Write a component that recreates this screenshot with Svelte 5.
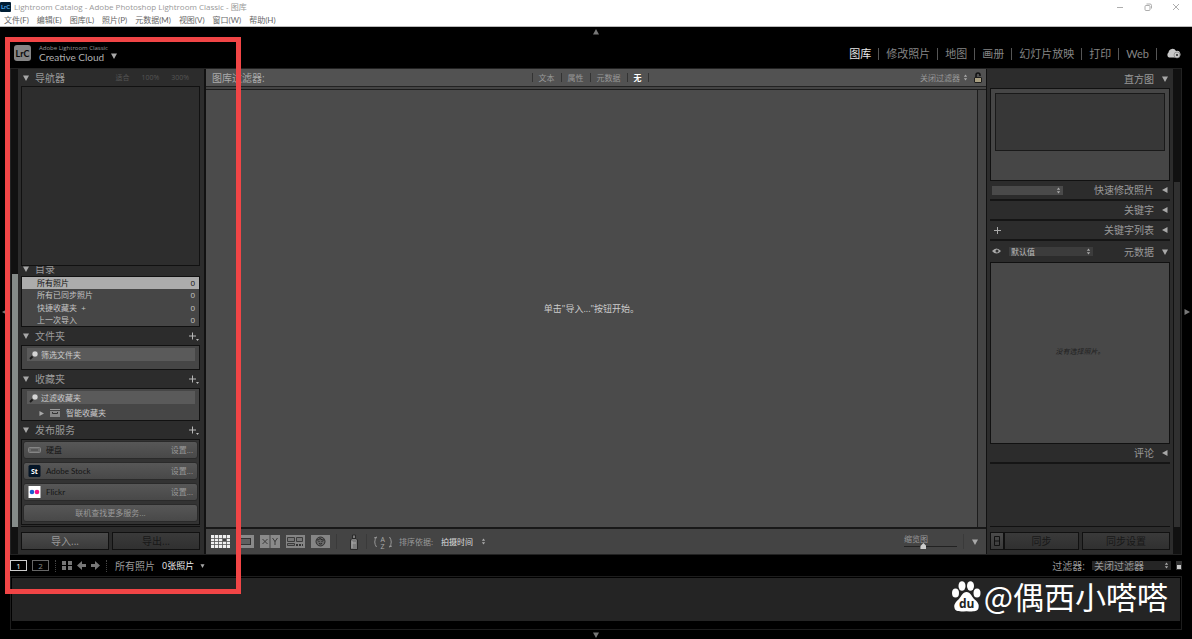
<script>
  const menus = ['文件(F)', '编辑(E)', '图库(L)', '照片(P)', '元数据(M)', '视图(V)', '窗口(W)', '帮助(H)'];
  const modules = ['图库', '修改照片', '地图', '画册', '幻灯片放映', '打印', 'Web'];
  const filters = ['文本', '属性', '元数据', '无'];
  const catalog = ['所有照片', '所有已同步照片', '快捷收藏夹  +', '上一次导入'];
  let thumb = $state(35);
</script>

{#snippet tri(dir)}
  <svg class="tri {dir}" viewBox="0 0 6 6" aria-hidden="true"><path d="M0 .5H6L3 6Z" /></svg>
{/snippet}

{#snippet heading(title)}
  <header class="head">
    {@render tri('down')}
    <h2>{title}</h2>
    <button class="add" aria-label="添加">
      <svg viewBox="0 0 10 9"><path d="M0 4H7M3.500 .5V7.500" stroke="#b8b8b8" /><path d="M7 7h3L8.500 9Z" fill="#b8b8b8" /></svg>
    </button>
  </header>
{/snippet}

{#snippet search(text, id)}
  <div class="search">
    <svg viewBox="0 0 10 10" aria-hidden="true"><path d="M1 9L4 6" stroke="#1c1c1c" stroke-width="2" /><circle cx="6" cy="4" r="3" fill="#d5d5d5" stroke="#555" stroke-width=".5" /></svg>
    <input {id} type="text" placeholder={text} aria-label={text} />
  </div>
{/snippet}

{#snippet updown()}
  <svg class="updown" viewBox="0 0 6 8" aria-hidden="true"><path d="M1 3L3 .5L5 3ZM1 5L3 7.500L5 5Z" /></svg>
{/snippet}

<div class="app">
  <div class="titlebar">
    <svg class="appicon" viewBox="0 0 11 10"><rect width="11" height="10" rx="1" fill="#001d34" /><text x="1" y="7" font-size="6" font-family="Lato, sans-serif" font-weight="700" fill="#4fa8e8">LrC</text></svg>
    <span>Lightroom Catalog - Adobe Photoshop Lightroom Classic - 图库</span>
    <div class="win">
      <button aria-label="最小化"><svg viewBox="0 0 8 8"><path d="M1 4.500H7" /></svg></button>
      <button aria-label="还原"><svg viewBox="0 0 8 8"><rect x="1" y="2.500" width="5" height="5" rx="1" /><path d="M2.500 1H6Q7.500 1 7.500 2.500V5.500" /></svg></button>
      <button aria-label="关闭"><svg viewBox="0 0 8 8"><path d="M1 1L7 7M7 1L1 7" /></svg></button>
    </div>
  </div>
  <nav class="menubar">
    {#each menus as m}<button>{m}</button>{/each}
  </nav>

  <header class="top">
    <svg class="logo" viewBox="0 0 17 16"><rect width="17" height="16" rx="3" fill="#858585" /><text x="1.500" y="11.500" font-size="9" font-weight="700" font-family="Lato, sans-serif" fill="#0a0a0a">LrC</text></svg>
    <button class="identity">
      <span class="brand"><small>Adobe Lightroom Classic</small><strong>Creative Cloud</strong></span>
      {@render tri('down')}
    </button>
    <button class="edge north" aria-label="隐藏顶部">{@render tri('up')}</button>
    <nav class="modules">
      {#each modules as m, i}
        <a href="#{i}" class:active={i === 0}>{m}</a><i></i>
      {/each}
      <svg class="cloud" viewBox="0 0 15 11"><path d="M3 9.500A3 3 0 0 1 2.500 4.500 A4 4 0 0 1 10 3 A3 3 0 0 1 12 9.500Z" fill="#c9c9c9" /><circle cx="11" cy="7" r="3" fill="#c9c9c9" stroke="#777" stroke-width=".6" /><circle cx="11" cy="7" r="1" fill="#222" /></svg>
    </nav>
  </header>

  <div class="row">
    <button class="edge side" aria-label="隐藏左侧面板">{@render tri('left')}</button>
    <main class="work">
      <div class="track leftTrack"><div></div></div>
      <aside class="panel">
        <header class="head nav">
          {@render tri('down')}
          <h2>导航器</h2>
          <div class="zooms"><button>适合</button><button>100%</button><button>300%</button></div>
        </header>
        <div class="preview"></div>
        <header class="head cut">{@render tri('down')}<h2>目录</h2></header>
        <ul class="box catalog">
          {#each catalog as c, i}
            <li class:selected={i === 0}><span>{c}</span><span>0</span></li>
          {/each}
        </ul>
        {@render heading('文件夹')}
        <section class="box folders">{@render search('筛选文件夹', 'folders')}</section>
        {@render heading('收藏夹')}
        <section class="box collections">
          {@render search('过滤收藏夹', 'collections')}
          <div class="smart">
            {@render tri('right')}
            <svg class="set" viewBox="0 0 10 8"><path d="M0 .5H10" stroke="#999" /><path d="M0 2h10v6H0z" fill="#888" /><path d="M2.500 3v1.500h5V3" stroke="#333" fill="none" /></svg>
            <span>智能收藏夹</span>
          </div>
        </section>
        {@render heading('发布服务')}
        <section class="box services">
          <div class="service">
            <svg viewBox="0 0 13 12"><rect x=".5" y="3.500" width="12" height="5" rx="1" fill="#6c6c6c" stroke="#858585" /><path d="M3 6h7" stroke="#444" /></svg>
            <span>硬盘</span><button>设置...</button>
          </div>
          <div class="service">
            <svg viewBox="0 0 13 12"><rect x=".5" width="12" height="12" rx="1.500" fill="#051526" /><text x="3" y="8.500" font-size="7" font-weight="700" font-family="Open Sans, sans-serif" fill="#fff">St</text></svg>
            <span>Adobe Stock</span><button>设置...</button>
          </div>
          <div class="service">
            <svg viewBox="0 0 13 12"><rect x=".5" width="12" height="12" fill="#fff" /><circle cx="4" cy="6" r="2.300" fill="#1a5fd0" /><circle cx="9" cy="6" r="2.300" fill="#f5148a" /></svg>
            <span>Flickr</span><button>设置...</button>
          </div>
          <button class="service more">联机查找更多服务...</button>
        </section>
        <footer class="actions">
          <button class="btn">导入...</button>
          <button class="btn dim">导出...</button>
        </footer>
      </aside>

      <section class="center">
        <header class="filterbar">
          <h1>图库过滤器:</h1>
          <div class="tabs">
            <i></i>
            {#each filters as f, i}<button class:active={i === 3}>{f}</button><i></i>{/each}
          </div>
          <label class="pick end"><select aria-label="过滤器预设"><option>关闭过滤器</option></select>{@render updown()}</label>
          <button class="lock" aria-label="锁定过滤器">
            <svg viewBox="0 0 8 12"><path d="M2 6V3Q2 1 4 1T6 3V4" stroke="#111" stroke-width="1.500" fill="none" /><rect x=".5" y="5.500" width="7" height="5" rx=".5" fill="#aaa081" stroke="#1d1d1d" /></svg>
          </button>
        </header>
        <div class="stage"><div class="canvas">单击"导入..."按钮开始。</div><div class="gutter"></div></div>
        <footer class="toolbar">
          <button aria-label="网格视图"><svg width="19" height="13" viewBox="0 0 19 13"><rect width="19" height="13" fill="#f0f0f0" /><path d="M3.500 0V13M7.500 0V13M11.500 0V13M15.500 0V13M0 3.500H19M0 6.500H19M0 9.500H19" stroke="#555" stroke-width=".8" /><path d="M12 4h3v2h-3z" fill="#444" /></svg></button>
          <button aria-label="放大视图"><svg width="18" height="13" viewBox="0 0 18 13"><rect width="18" height="13" fill="#8a8a8a" /><rect x="3.500" y="3.500" width="11" height="6" fill="#606060" stroke="#333" /></svg></button>
          <button aria-label="比较视图"><svg width="20" height="13" viewBox="0 0 20 13"><rect width="20" height="13" fill="#8a8a8a" /><path d="M10 0V13" stroke="#444" /><path d="M2.500 4L7.500 9M7.500 4L2.500 9M12.500 3L15 6.500L17.500 3M15 6V10" stroke="#3b3b3b" fill="none" /></svg></button>
          <button aria-label="筛选视图"><svg width="19" height="13" viewBox="0 0 19 13"><rect width="19" height="13" fill="#858585" /><path d="M1.500 2.500h7v4h-7zM10.500 2.500h6v4h-6zM1.500 8.500h7v2h-7z" fill="#777" stroke="#3c3c3c" /><path d="M10 10h7" stroke="#333" stroke-width="2" stroke-dasharray="2 1" /></svg></button>
          <button aria-label="人物"><svg width="19" height="13" viewBox="0 0 19 13"><rect width="19" height="13" fill="#858585" /><circle cx="9.500" cy="6.500" r="4.500" fill="#666" stroke="#2f2f2f" /><path d="M6 5Q8 5 9 3.500Q11 5.500 13 5M7.500 6.500h1M10.500 6.500h1M8 8.500q1.500 1 3 0" stroke="#252525" fill="none" /></svg></button>
          <i></i>
          <button class="spray" aria-label="喷涂"><svg width="10" height="16" viewBox="0 0 10 16"><path d="M1.500 15.500V6L3 4.500H7L8.500 6V15.500ZM3.500 4V1H6.500V4" fill="#7c7c7c" stroke="#292929" /><path d="M3 7v7M3 9h4" stroke="#aaa" /></svg></button>
          <i></i>
          <button aria-label="排序方向"><svg width="20" height="14" viewBox="0 0 20 14"><path d="M3.500 2Q0 7 3.500 12M1 3l3-1M16.500 2Q20 7 16.500 12M19 11l-3 1" stroke="#969696" fill="none" /><text x="7.500" y="6.500" font-size="7" font-family="Open Sans, sans-serif" fill="#aaa">A</text><text x="7.500" y="13.500" font-size="7" font-family="Open Sans, sans-serif" fill="#aaa">Z</text></svg></button>
          <label class="pick sort"><span>排序依据:</span><select><option>拍摄时间</option></select>{@render updown()}</label>
          <label class="thumbs"><span>缩览图</span><input type="range" min="0" max="100" bind:value={thumb} /></label>
          <i></i>
          <button class="more-tools" aria-label="工具栏选项">{@render tri('down')}</button>
        </footer>
      </section>

      <aside class="panel inspector">
        <header class="head nav"><h2>直方图</h2>{@render tri('down')}</header>
        <div class="box histogram"><div></div></div>
        <header class="head quick">
          <label class="drop blank"><select aria-label="预设"><option> </option></select>{@render updown()}</label>
          <h2>快速修改照片</h2>{@render tri('left')}
        </header>
        <header class="head sep"><h2>关键字</h2>{@render tri('left')}</header>
        <header class="head sep">
          <button class="add" aria-label="新建关键字"><svg viewBox="0 0 10 9"><path d="M2 4.500H9M5.500 1V8" stroke="#aaa" /></svg></button>
          <h2>关键字列表</h2>{@render tri('left')}
        </header>
        <header class="head meta">
          <svg class="eye" viewBox="0 0 9 7"><path d="M0 3Q4.500-2 9 3Q4.500 8 0 3Z" fill="#aaa" /><circle cx="5" cy="3" r="1.500" fill="#333" /></svg>
          <label class="drop"><select aria-label="元数据集"><option>默认值</option></select>{@render updown()}</label>
          <h2>元数据</h2>{@render tri('down')}
        </header>
        <div class="box empty">没有选择照片。</div>
        <header class="head sep"><h2>评论</h2>{@render tri('left')}</header>
        <footer class="actions">
          <button class="btn toggle" aria-label="自动同步"><svg viewBox="0 0 6 10"><path d="M.5 .5h5v9h-5zM.5 5h5" fill="none" stroke="#111" /></svg></button>
          <button class="btn dim sync">同步</button>
          <button class="btn dim">同步设置</button>
        </footer>
      </aside>
      <div class="track rightTrack"><div></div></div>
    </main>
    <button class="edge side" aria-label="隐藏右侧面板">{@render tri('right')}</button>
  </div>

  <div class="stripbar">
    <button class="screen on">1</button>
    <button class="screen">2</button>
    <i></i>
    <button aria-label="网格"><svg width="10" height="9" viewBox="0 0 10 9"><path d="M0 0h4v4H0zM6 0h4v4H6zM0 5h4v4H0zM6 5h4v4H6z" fill="#777" /></svg></button>
    <button aria-label="后退"><svg width="9" height="9" viewBox="0 0 9 9"><path d="M0 4.500L5 0V3H9V6H5V9Z" fill="#777" /></svg></button>
    <button aria-label="前进"><svg width="9" height="9" viewBox="0 0 9 9"><path d="M9 4.500L4 0V3H0V6H4V9Z" fill="#777" /></svg></button>
    <i></i>
    <span class="source">所有照片</span>
    <button class="count">0张照片 {@render tri('down')}</button>
    <label class="filter"><span>过滤器:</span><span class="drop"><select><option>关闭过滤器</option></select>{@render updown()}</span></label>
    <button aria-label="过滤器开关"><svg width="6" height="9" viewBox="0 0 6 9"><rect width="6" height="9" fill="#333" /><rect x="1" y="4" width="4" height="4" fill="#ccc" /></svg></button>
  </div>
  <div class="film"><div></div></div>
  <button class="edge south" aria-label="隐藏胶片窗格">{@render tri('down')}</button>

  <div class="frame"></div>
  <div class="watermark">
    <svg viewBox="0 0 29 31"><g fill="#fff"><ellipse cx="3.500" cy="12" rx="3.500" ry="4.500" /><ellipse cx="10" cy="5" rx="3.500" ry="4.800" /><ellipse cx="18.500" cy="5" rx="3.500" ry="4.800" /><ellipse cx="25" cy="12" rx="3.500" ry="4.500" /><path d="M14.500 11C18.500 11 19.500 15 22 18C25.500 21 27.500 23 26.500 27C25.500 31 21 30.500 14.500 30.200C8 30.500 3.500 31 2.500 27C1.500 23 4 21 7 18C9.500 15 10.500 11 14.500 11Z" /></g><text x="7" y="27" font-size="12" font-weight="700" font-family="Open Sans, sans-serif" fill="#222">du</text></svg>
    <span>@偶西小嗒嗒</span>
  </div>
</div>

<style>
  :global(body) { margin: 0; background: #000; }
  .app, .app * { box-sizing: border-box; }
  .app {
    position: relative; min-height: 100vh; display: flex; flex-direction: column;
    background: #000; color: #999; overflow: hidden;
    font: 8px/12px "Open Sans", "Noto Sans CJK SC", sans-serif;
  }
  button, select, input { font: inherit; color: inherit; background: none; border: 0; padding: 0; margin: 0; }
  button { display: flex; align-items: center; justify-content: center; white-space: nowrap; }
  h1, h2, ul { margin: 0; padding: 0; font-weight: 400; list-style: none; }
  svg { display: block; flex: none; }
  select { appearance: none; outline: 0; }
  .tri { width: 6px; height: 6px; fill: #a8a8a8; }
  .tri.left { transform: rotate(90deg); }
  .tri.right { transform: rotate(-90deg); }
  .tri.up { transform: rotate(180deg); }
  .updown { width: 5px; height: 7px; fill: #aaa; }

  .titlebar { display: flex; align-items: center; gap: 3px; height: 14px; background: #fff; color: #999; padding-right: 12px; }
  .appicon { width: 11px; height: 10px; }
  .win { margin-left: auto; display: flex; gap: 20px; }
  .win svg { width: 8px; height: 8px; fill: none; stroke: #999; stroke-width: .8; }
  .menubar { display: flex; gap: 8px; height: 13px; padding-left: 4px; background: #fff; color: #666; border-bottom: 1px solid #bbb; font-family: Lato, "Noto Sans CJK SC", sans-serif; }

  .top { position: relative; display: flex; align-items: center; height: 41px; padding: 10px 11px 0 14px; }
  .logo { width: 17px; height: 16px; }
  .identity { gap: 3px; margin-left: 8px; text-align: left; }
  .identity .tri { margin-top: 6px; }
  .brand { display: flex; flex-direction: column; }
  .brand small { font-size: 6px; line-height: 8px; color: #999; }
  .brand strong { font: 400 10px/10px Lato, sans-serif; color: #b0b0b0; }
  .edge .tri { fill: #777; }
  .north { position: absolute; top: 2px; left: 50%; margin-left: -4px; }
  .north .tri, .south .tri { width: 8px; }
  .modules { margin-left: auto; display: flex; align-items: center; gap: 7px; font: 11px/16px Lato, "Noto Sans CJK SC", sans-serif; padding-top: 2px; }
  .modules a { color: #858585; text-decoration: none; }
  .modules a.active { color: #e8e8e8; }
  .modules i { width: 1px; height: 12px; background: #555; }
  .cloud { width: 15px; height: 11px; margin-left: 2px; }

  .row { display: flex; flex: 1; }
  .side { width: 10px; }
  .work { flex: 1; min-width: 0; display: flex; border: 1px solid #222; background: #2c2c2c; }
  .track { width: 7px; background: #111; display: flex; flex-direction: column; }
  .track div { flex: 1; }
  .leftTrack { padding: 205px 0 27px 1px; }
  .leftTrack div { background: #858b89; }
  .rightTrack { padding: 113px 1px 27px 0; }
  .rightTrack div { background: #303030; }

  .panel { width: 188px; flex: none; display: flex; flex-direction: column; padding: 0 4px 4px 3px; background: #2c2c2c; border-right: 2px solid #111; }
  .head { display: flex; align-items: center; height: 18px; padding: 0 1px 0 2px; }
  .head h2 { font-size: 10px; line-height: 14px; margin-left: 6px; color: #999; }
  .head .add { margin-left: auto; }
  .add svg { width: 10px; height: 9px; }
  .nav { height: 17px; }
  .zooms { display: flex; gap: 12px; margin-left: auto; padding-right: 10px; color: #555; font-size: 7px; }
  .preview { height: 180px; border: 1px solid #111; background: #2d2d2d; }
  .cut { height: 10px; overflow: hidden; align-items: flex-start; }
  .cut h2 { margin-top: -4px; }
  .box { border: 1px solid #111; background: #464646; }
  .catalog { height: 51px; display: grid; color: #c4c4c4; }
  .catalog li { display: flex; align-items: center; justify-content: space-between; padding: 0 4px 0 15px; white-space: pre; }
  .catalog .selected { background: #acacac; color: #111; }
  .folders { height: 25px; padding: 2px 4px 0 5px; }
  .collections { height: 33px; padding: 2px 4px 0 5px; }
  .search { display: flex; align-items: center; gap: 2px; height: 13px; padding-left: 2px; background: #5a5a5a; }
  .search svg { width: 10px; height: 10px; }
  .search input { flex: 1; min-width: 0; height: 13px; }
  .search input::placeholder { color: #ccc; opacity: 1; }
  .smart { display: flex; align-items: center; height: 18px; padding-left: 12px; color: #ccc; }
  .smart .set { width: 10px; height: 8px; margin-right: 6px; }
  .smart .tri { width: 5px; height: 5px; margin-right: 6px; }
  .services { display: grid; gap: 3px; padding: 1px 1px 2px; background: #333; }
  .service { display: flex; align-items: center; height: 18px; width: 100%; padding: 0 4px; border: 1px solid #2a2a2a; border-radius: 3px; background: linear-gradient(#575757, #484848); color: #151515; }
  .service svg { width: 13px; height: 12px; }
  .service span { margin-left: 5px; font-family: Lato, "Noto Sans CJK SC", sans-serif; }
  .service button { margin-left: auto; color: #999; }
  .more { justify-content: center; color: #999; }
  .actions { display: flex; gap: 3px; margin-top: auto; padding-top: 5px; border-top: 1px solid #111; }
  .btn { flex: 1; height: 18px; border: 1px solid #111; background: linear-gradient(#4b4b4b, #3a3a3a); color: #999; font-size: 10px; }
  .dim { background: linear-gradient(#3a3a3a, #303030); color: #181818; }

  .center { flex: 1; min-width: 0; display: flex; flex-direction: column; background: #444; }
  .filterbar { display: grid; grid-template-columns: 1fr auto 1fr 10px; align-items: center; gap: 5px; height: 18px; padding: 0 3px 0 6px; background: #525252; border-bottom: 1px solid #222; }
  .filterbar h1 { font-size: 10px; line-height: 14px; color: #aaa; }
  .tabs { display: flex; align-items: center; gap: 6px; }
  .tabs i { width: 1px; height: 9px; background: #333; }
  .tabs .active { color: #fff; font-weight: 700; }
  .pick { display: flex; align-items: center; gap: 3px; }
  .end { justify-content: flex-end; }
  .lock svg { width: 8px; height: 12px; }
  .stage { flex: 1; display: flex; padding-top: 2px; background: #444; }
  .canvas { flex: 1; display: grid; place-items: center; background: #4b4b4b; border: solid #1c1c1c; border-width: 1px 1px 0 0; color: #ccc; font-size: 9px; }
  .gutter { width: 8px; border-top: 1px solid #1c1c1c; }
  .toolbar { display: flex; align-items: center; gap: 6px; height: 27px; padding: 0 6px 0 5px; background: #444; border-top: 2px solid #181818; }
  .toolbar i { width: 1px; height: 15px; background: #3a3a3a; }
  .spray { margin: 0 1px 0 6px; }
  .sort { gap: 8px; }
  .sort select { color: #ddd; }
  .thumbs { width: 53px; margin-left: auto; line-height: 9px; display: flex; flex-direction: column; }
  .thumbs input { width: 100%; height: 7px; appearance: none; background: linear-gradient(#222, #222) center / 100% 1px no-repeat; }
  .thumbs input::-webkit-slider-thumb { appearance: none; width: 6px; height: 6px; background: #ccc; clip-path: polygon(50% 0, 100% 50%, 100% 100%, 0 100%, 0 50%); }
  .more-tools { width: 10px; }

  .inspector { padding: 0 3px 4px 3px; border-left: 1px solid #111; border-right: 1px solid #111; }
  .inspector .head { justify-content: flex-end; gap: 8px; padding: 0 2px; }
  .inspector .head h2 { margin-left: 0; }
  .inspector .head .add { margin: 0 auto 0 0; }
  .inspector .nav { height: 19px; }
  .histogram { height: 93px; padding: 4px; }
  .histogram div { height: 58px; border: 1px solid #191919; background: #373737; }
  .inspector .quick, .inspector .sep { height: 20px; border-bottom: 2px solid #151515; }
  .inspector .meta { height: 21px; }
  .drop { display: flex; align-items: center; justify-content: space-between; width: 84px; height: 9px; margin-right: auto; padding: 0 2px; background: #3c3c3c; color: #bbb; }
  .drop select { flex: 1; min-width: 0; height: 11px; line-height: 10px; }
  .blank { width: 71px; background: #4a4a4a; }
  .eye { width: 9px; height: 7px; }
  .empty { height: 182px; display: grid; place-items: center; font-size: 7px; font-style: italic; color: #202020; background: #484848; padding-bottom: 3px; }
  .inspector .actions { gap: 0; }
  .inspector .toggle { flex: none; width: 14px; }
  .toggle svg { width: 6px; height: 10px; }
  .inspector .sync { flex: none; width: 75px; margin-right: 3px; }

  .stripbar { display: flex; align-items: center; gap: 5px; height: 21px; padding: 0 10px; font-size: 10px; }
  .screen { width: 17px; height: 11px; border: 1px solid #666; color: #888; font-size: 8px; line-height: 9px; }
  .on { border-color: #ccc; color: #fff; }
  .stripbar i { height: 12px; margin: 0 1px; border-left: 1px dotted #444; }
  .source { margin-left: 2px; }
  .count { gap: 6px; color: #eee; font-size: 9px; margin-left: 2px; }
  .count .tri { width: 5px; height: 4px; }
  .filter { display: flex; align-items: center; gap: 7px; margin-left: auto; }
  .filter .drop { width: 79px; background: #252525; color: #999; }
  .film { height: 54px; padding: 1px 1px 8px; margin: 0 10px; border: 1px solid #1d1d1d; }
  .film div { height: 100%; background: #242424; }
  .south { height: 9px; }

  .frame { position: absolute; left: 5px; top: 37px; width: 236px; height: 557px; border: 5px solid #f14546; pointer-events: none; }
  .watermark { position: absolute; right: 24px; bottom: 22px; display: flex; align-items: center; gap: 3px; color: #fff; font: 31px/42px "Noto Sans CJK SC", sans-serif; }
  .watermark svg { width: 29px; height: 31px; }
</style>
